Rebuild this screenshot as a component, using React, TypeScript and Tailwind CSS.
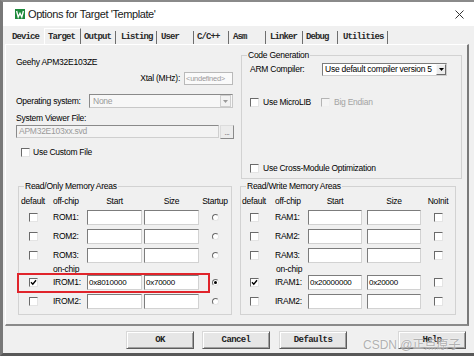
import React from 'react';

const Cb = ({ checked = false, disabled = false }: { checked?: boolean; disabled?: boolean }) => (
  <span
    className={
      disabled
        ? 'relative inline-block shrink-0 w-[9px] h-[9px] bg-[#f4f4f4] border border-t-[#b4b4b4] border-l-[#b4b4b4] border-r-[#efefef] border-b-[#efefef]'
        : 'relative inline-block shrink-0 w-[9px] h-[9px] bg-white border border-t-[#6a6a6a] border-l-[#6a6a6a] border-r-[#e4e4e4] border-b-[#e4e4e4]'
    }
  >
    {checked && (
      <svg viewBox="0 0 7 7" className="absolute inset-0 w-[7px] h-[7px]">
        <path d="M1 3.2 L2.8 5.2 L6 1.2" stroke="#000" strokeWidth="1.4" fill="none" />
      </svg>
    )}
  </span>
);

const Radio = ({ on = false }: { on?: boolean }) => (
  <span className="inline-flex shrink-0 items-center justify-center w-[7px] h-[7px] rounded-full bg-white border border-t-[#6a6a6a] border-l-[#6a6a6a] border-r-[#e6e6e6] border-b-[#e6e6e6]">
    {on && <span className="w-[3px] h-[3px] rounded-full bg-black" />}
  </span>
);

const Field = ({ className, text = '' }: { className: string; text?: string }) => (
  <div
    className={
      'h-[15px] shrink-0 bg-white border border-t-[#7c7c7c] border-l-[#7c7c7c] border-r-[#d2d2d2] border-b-[#d2d2d2] flex items-center pl-[1px] text-[8px] overflow-hidden whitespace-nowrap ' +
      className
    }
  >
    {text}
  </div>
);

const Group = ({ title, className, children }: { title: string; className: string; children?: React.ReactNode }) => (
  <div className={'relative shrink-0 border border-[#d2d2d2] ' + className}>
    <span className="absolute left-[5px] -top-[6px] px-[1px] bg-[#f0f0f0] leading-[11px] whitespace-nowrap">{title}</span>
    {children}
  </div>
);

const tabs = [
  { t: 'Device', c: 'w-[39px] pl-[7px] h-[13px]' },
  { t: 'Target', c: 'w-[37px] pl-[3px] h-[16px] border-t border-l border-t-white border-l-white border-r border-r-[#6e6e6e] pt-[2px]' },
  { t: 'Output', c: 'w-[35px] pl-[3px] h-[13px] border-r border-r-[#6e6e6e]' },
  { t: 'Listing', c: 'w-[41px] pl-[5px] h-[13px] border-r border-r-[#6e6e6e]' },
  { t: 'User', c: 'w-[37px] pl-[4px] h-[13px] border-r border-r-[#6e6e6e]' },
  { t: 'C/C++', c: 'w-[35px] pl-[3px] h-[13px] border-r border-r-[#6e6e6e]' },
  { t: 'Asm', c: 'w-[37px] pl-[4px] h-[13px] border-r border-r-[#6e6e6e]' },
  { t: 'Linker', c: 'w-[37px] pl-[4px] h-[13px] border-r border-r-[#6e6e6e]' },
  { t: 'Debug', c: 'w-[35px] pl-[3px] h-[13px] border-r border-r-[#6e6e6e]' },
  { t: 'Utilities', c: 'w-[50px] pl-[5px] h-[13px] border-r border-r-[#6e6e6e]' },
];

const roRows = [
  { l: 'ROM1:', s: '', z: '', ck: false, r: false },
  { l: 'ROM2:', s: '', z: '', ck: false, r: false },
  { l: 'ROM3:', s: '', z: '', ck: false, r: false },
];
const roRows2 = [
  { l: 'IROM1:', s: '0x8010000', z: '0x70000', ck: true, r: true },
  { l: 'IROM2:', s: '', z: '', ck: false, r: false },
];
const rwRows = [
  { l: 'RAM1:', s: '', z: '', ck: false },
  { l: 'RAM2:', s: '', z: '', ck: false },
  { l: 'RAM3:', s: '', z: '', ck: false },
];
const rwRows2 = [
  { l: 'IRAM1:', s: '0x20000000', z: '0x20000', ck: true },
  { l: 'IRAM2:', s: '', z: '', ck: false },
];

const RoRow = ({ r }: { r: { l: string; s: string; z: string; ck: boolean; r: boolean } }) => (
  <div className="flex h-[19px] items-center">
    <span className="w-[28px] flex justify-center">
      <Cb checked={r.ck} />
    </span>
    <span className="w-[40px] pl-[6px]">{r.l}</span>
    <Field className="w-[55px]" text={r.s} />
    <span className="w-[2px]" />
    <Field className="w-[55px]" text={r.z} />
    <span className="w-[32px] flex justify-center">
      <Radio on={r.r} />
    </span>
  </div>
);

const RwRow = ({ r }: { r: { l: string; s: string; z: string; ck: boolean } }) => (
  <div className="flex h-[19px] items-center">
    <span className="w-[26px] flex justify-center">
      <Cb checked={r.ck} />
    </span>
    <span className="w-[41px] pl-[8px]">{r.l}</span>
    <Field className="w-[54px]" text={r.s} />
    <span className="w-[5px]" />
    <Field className="w-[54px]" text={r.z} />
    <span className="w-[34px] flex justify-center">
      <Cb />
    </span>
  </div>
);

const Btn = ({ label, className }: { label: string; className: string }) => (
  <div
    className={
      'h-[18px] w-[68px] flex items-center justify-center bg-[#e6e6e6] border border-t-[#d8d8d8] border-l-[#d8d8d8] border-r-[#5c5c5c] border-b-[#5c5c5c] shadow-[inset_1px_1px_0_#ffffff,inset_-1px_-1px_0_#a0a0a0] font-["Liberation_Mono",monospace] font-bold text-[9px] tracking-[-0.6px] text-[#222] ' +
      className
    }
  >
    {label}
  </div>
);

export default function App() {
  return (
    <div className="relative w-[474px] h-[356px] overflow-hidden bg-[#f0f0f0] border-t-2 border-l-[3px] border-b-[3px] border-t-[#8a8a8a] border-l-[#787878] border-b-[#585858] flex flex-col font-['Liberation_Sans',Arial,sans-serif] text-[8.5px] tracking-[-0.25px] text-black leading-none">
      {/* title bar */}
      <div className="h-[24px] shrink-0 bg-white flex items-center pl-[12px] pr-[10px]">
        <svg width="10" height="10" viewBox="0 0 10 10" className="shrink-0">
          <rect x="0" y="0" width="10" height="10" fill="#1e8a3c" />
          <path d="M1.6 2 L3.2 8 L5 4.2 L6.8 8 L8.4 2" stroke="#fff" strokeWidth="1.3" fill="none" />
        </svg>
        <span className="ml-[3px] text-[11px] tracking-[-0.4px] text-[#1a1a1a]">Options for Target 'Template'</span>
        <svg width="9" height="9" viewBox="0 0 9 9" className="ml-auto">
          <path d="M0.5 0.5 L8.5 8.5 M8.5 0.5 L0.5 8.5" stroke="#333" strokeWidth="1" />
        </svg>
      </div>

      {/* tabs */}
      <div className="h-[18px] shrink-0 flex items-end pl-[2px] font-['Liberation_Mono',monospace] font-bold text-[9px] tracking-[-0.9px] text-[#2a2a2a]">
        {tabs.map((t) => (
          <div key={t.t} className={'flex items-center shrink-0 ' + t.c}>
            {t.t}
          </div>
        ))}
      </div>

      {/* panel */}
      <div className="ml-[2px] w-[464px] h-[282px] shrink-0 border-t border-l border-t-white border-l-white border-r-2 border-b-2 border-r-[#7a7a7a] border-b-[#8a8a8a] flex flex-col">
        {/* top section */}
        <div className="flex h-[135px] shrink-0">
          <div className="ml-[10px] w-[219px] flex flex-col pt-[11px]">
            <div className="h-[12px] flex items-center">Geehy APM32E103ZE</div>
            <div className="mt-[3px] h-[15px] flex items-center justify-end pr-[2px]">
              <span className="mr-[4px]">Xtal (MHz):</span>
              <div className="w-[49px] h-[13px] bg-[#fafafa] border border-[#b9b9b9] flex items-center pl-[1px] text-[7.5px] text-[#9a9a9a]">
                &lt;undefined&gt;
              </div>
            </div>
            <div className="mt-[7px] h-[16px] flex items-center pr-[2px]">
              <span>Operating system:</span>
              <div className="ml-auto w-[144px] h-[14px] bg-[#f7f7f7] border border-t-[#8a8a8a] border-l-[#8a8a8a] border-r-[#c8c8c8] border-b-[#c8c8c8] flex items-center">
                <span className="flex-1 pl-[3px] text-[#9a9a9a]">None</span>
                <span className="w-[11px] h-[12px] mr-[1px] border border-[#cfcfcf] bg-[#f2f2f2] flex items-center justify-center">
                  <svg width="5" height="3" viewBox="0 0 5 3">
                    <path d="M0 0 L5 0 L2.5 3 Z" fill="#9a9a9a" />
                  </svg>
                </span>
              </div>
            </div>
            <div className="mt-[3px] h-[12px] flex items-center">System Viewer File:</div>
            <div className="mt-[1px] h-[14px] flex items-start">
              <div className="w-[203px] h-[13px] bg-[#f3f3f3] border border-t-[#8a8a8a] border-l-[#8a8a8a] border-r-[#cfcfcf] border-b-[#cfcfcf] flex items-center pl-[2px] text-[#9a9a9a]">
                APM32E103xx.svd
              </div>
              <div className="ml-[1px] w-[14px] h-[14px] bg-[#ececec] border border-t-[#dcdcdc] border-l-[#dcdcdc] border-r-[#8a8a8a] border-b-[#8a8a8a] flex items-end justify-center pb-[2px] text-[7px] text-[#444]">
                ...
              </div>
            </div>
            <div className="mt-[7px] h-[12px] flex items-center pl-[5px]">
              <Cb />
              <span className="ml-[3px]">Use Custom File</span>
            </div>
          </div>

          <Group title="Code Generation" className="ml-[6px] mt-[10px] w-[221px] h-[124px] flex flex-col">
            <div className="mt-[6px] h-[14px] flex items-center pl-[8px]">
              <span className="w-[72px]">ARM Compiler:</span>
              <div className="w-[125px] h-[13px] bg-white border border-t-[#7c7c7c] border-l-[#7c7c7c] border-r-[#cdcdcd] border-b-[#cdcdcd] flex items-center">
                <span className="flex-1 pl-[2px] whitespace-nowrap overflow-hidden">Use default compiler version 5</span>
                <span className="w-[10px] h-[11px] bg-[#ececec] border border-t-[#f8f8f8] border-l-[#f8f8f8] border-r-[#6a6a6a] border-b-[#6a6a6a] flex items-center justify-center">
                  <svg width="5" height="3" viewBox="0 0 5 3">
                    <path d="M0 0 L5 0 L2.5 3 Z" fill="#000" />
                  </svg>
                </span>
              </div>
            </div>
            <div className="mt-[20px] h-[12px] flex items-center pl-[8px]">
              <div className="w-[71px] flex items-center">
                <Cb />
                <span className="ml-[4px]">Use MicroLIB</span>
              </div>
              <Cb disabled />
              <span className="ml-[4px] text-[#a3a3a3]">Big Endian</span>
            </div>
            <div className="mt-[54px] h-[12px] flex items-center pl-[8px]">
              <Cb />
              <span className="ml-[4px]">Use Cross-Module Optimization</span>
            </div>
          </Group>
        </div>

        {/* bottom section */}
        <div className="mt-[6px] flex">
          <Group title="Read/Only Memory Areas" className="ml-[12px] w-[214px] h-[129px]">
            <div className="flex flex-col pt-[7px]">
              <div className="flex h-[14px] items-center whitespace-nowrap">
                <span className="w-[28px] text-center">default</span>
                <span className="w-[40px] pl-[6px]">off-chip</span>
                <span className="w-[55px] text-center">Start</span>
                <span className="w-[2px]" />
                <span className="w-[55px] text-center">Size</span>
                <span className="w-[32px] text-center">Startup</span>
              </div>
              {roRows.map((r) => (
                <RoRow key={r.l} r={r} />
              ))}
              <div className="h-[8px] flex items-center pl-[34px]">on-chip</div>
              {roRows2.map((r) => (
                <RoRow key={r.l} r={r} />
              ))}
            </div>
            <div className="absolute left-[-2px] top-[86px] w-[193px] h-[20px] border-2 border-[#e0242b]" />
          </Group>

          <Group title="Read/Write Memory Areas" className="ml-[8px] w-[216px] h-[129px]">
            <div className="flex flex-col pt-[7px]">
              <div className="flex h-[14px] items-center whitespace-nowrap">
                <span className="w-[26px] text-center">default</span>
                <span className="w-[41px] pl-[8px]">off-chip</span>
                <span className="w-[54px] text-center">Start</span>
                <span className="w-[5px]" />
                <span className="w-[54px] text-center">Size</span>
                <span className="w-[34px] text-center">NoInit</span>
              </div>
              {rwRows.map((r) => (
                <RwRow key={r.l} r={r} />
              ))}
              <div className="h-[8px] flex items-center pl-[35px]">on-chip</div>
              {rwRows2.map((r) => (
                <RwRow key={r.l} r={r} />
              ))}
            </div>
          </Group>
        </div>
      </div>

      {/* buttons */}
      <div className="flex-1 flex items-start pt-[5px] pl-[123px]">
        <Btn label="OK" className="" />
        <Btn label="Cancel" className="ml-[8px]" />
        <Btn label="Defaults" className="ml-[9px]" />
        <Btn label="Help" className="ml-[51px]" />
      </div>

      <div className="absolute left-[360px] top-[337px] text-[12px] tracking-[0px] text-[#a8a8a8]/90 whitespace-nowrap font-['Liberation_Sans','Noto_Sans_CJK_SC',sans-serif] [text-shadow:0_0_2px_#ffffff]">
        CSDN @正点原子
      </div>
    </div>
  );
}
